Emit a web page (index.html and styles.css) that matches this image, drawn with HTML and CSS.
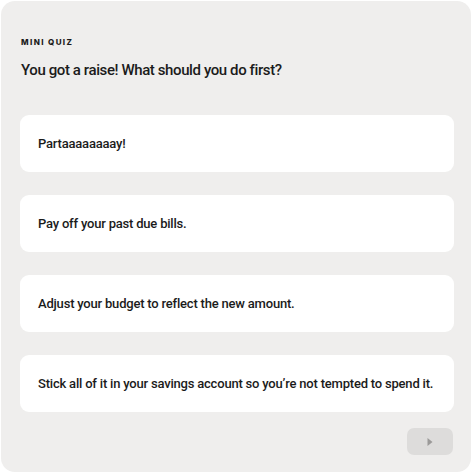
FILE: index.html
```html
<!DOCTYPE html>
<html>
<head>
<meta charset="utf-8">
<link rel="stylesheet" href="styles.css">
</head>
<body>
<div class="quiz">
  <div class="eyebrow">MINI QUIZ</div>
  <div class="question">You got a raise! What should you do first?</div>
  <div class="options">
    <div class="option">Partaaaaaaaay!</div>
    <div class="option">Pay off your past due bills.</div>
    <div class="option">Adjust your budget to reflect the new amount.</div>
    <div class="option">Stick all of it in your savings account so you’re not tempted to spend it.</div>
  </div>
  <div class="footer">
    <button class="next" aria-label="Next">
      <svg width="8" height="10" viewBox="0 0 8 10"><path d="M1.5 1 L6.5 5 L1.5 9 Z" fill="#9b9a99"/></svg>
    </button>
  </div>
</div>
</body>
</html>
```

FILE: styles.css
```css
html, body {
  margin: 0;
  padding: 0;
  background: #ffffff;
}
body {
  font-family: Roboto, "Noto Sans", sans-serif;
  color: #1b1b1b;
}
.quiz {
  box-sizing: border-box;
  margin: 1px;
  width: 470px;
  height: 471px;
  background: #efeeed;
  border-radius: 14px;
  padding: 35px 17px 0 19px;
  display: flex;
  flex-direction: column;
}
.eyebrow {
  font-family: Inter, sans-serif;
  font-size: 8px;
  line-height: 12px;
  font-weight: 800;
  letter-spacing: 1.4px;
  padding-left: 1px;
}
.question {
  margin-top: 12px;
  font-size: 15px;
  line-height: 20px;
  font-weight: 500;
  letter-spacing: -0.4px;
  padding-left: 1px;
}
.options {
  margin-top: 35px;
  display: flex;
  flex-direction: column;
  gap: 23px;
}
.option {
  box-sizing: border-box;
  height: 57px;
  background: #ffffff;
  border-radius: 9px;
  display: flex;
  align-items: center;
  padding: 0 18px;
  font-size: 13px;
  font-weight: 500;
  letter-spacing: -0.2px;
  white-space: nowrap;
}
.footer {
  margin-top: 16px;
  display: flex;
  justify-content: flex-end;
}
.next {
  width: 46px;
  height: 27px;
  border: none;
  border-radius: 7px;
  background: #dddcdb;
  display: flex;
  align-items: center;
  justify-content: center;
  padding: 0;
  margin-right: 1px;
}
```
